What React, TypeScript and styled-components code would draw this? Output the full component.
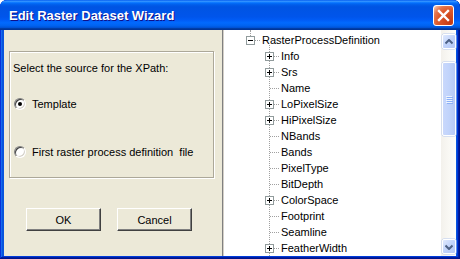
import React from "react";
import styled, { createGlobalStyle } from "styled-components";

const GlobalStyle = createGlobalStyle`
  html, body {
    margin: 0;
    padding: 0;
    background: #ffffff;
  }
  body {
    font-family: "Liberation Sans", Arial, sans-serif;
  }
`;

const Window = styled.div({
  width: 460,
  height: 259,
  display: "flex",
  flexDirection: "column",
  overflow: "hidden",
  borderRadius: "7px 7px 0 0",
  background: "#0855dd",
  boxShadow:
    "inset -1px -1px #00138c, inset 1px 1px #0831d9, inset -2px -2px #001ea0, inset 2px 2px #166aee, inset -3px -3px #003bda, inset 3px 3px #0855dd",
});

const TitleBar = styled.div({
  height: 30,
  flexShrink: 0,
  display: "flex",
  alignItems: "center",
  justifyContent: "space-between",
  padding: "0 6px 0 9px",
  boxSizing: "border-box",
  background:
    "linear-gradient(to bottom, #0058ee 0%, #3593ff 4%, #288eff 6%, #127dff 8%, #036ffc 10%, #0262ee 14%, #0057e5 20%, #0054e3 24%, #0055eb 56%, #005bf5 66%, #026afe 76%, #0062ef 86%, #0052d6 92%, #0040ab 94%, #003092 100%)",
});

const Title = styled.div({
  color: "#ffffff",
  fontWeight: "bold",
  fontSize: 13,
  fontFamily: '"Liberation Sans", Arial, sans-serif',
  textShadow: "1px 1px #0f1089",
  marginTop: 1,
});

const CloseButton = styled.div({
  width: 21,
  height: 21,
  boxSizing: "border-box",
  border: "1px solid #ffffff",
  borderRadius: 3,
  display: "flex",
  alignItems: "center",
  justifyContent: "center",
  background: "radial-gradient(circle at 85% 85%, #c43a12 0%, #de5a2c 55%, #e5774f 75%, #f2b59b 92%, #ffffff 100%)",
  marginTop: 1,
});

const Body = styled.div({
  flex: 1,
  display: "flex",
  margin: "0 4px 3px 4px",
  minHeight: 0,
});

const LeftPane = styled.div({
  width: 218,
  flexShrink: 0,
  background: "#ece9d8",
  display: "flex",
  flexDirection: "column",
});

const GroupBox = styled.div({
  margin: "21px 0 0 5px",
  width: 205,
  height: 127,
  boxSizing: "border-box",
  border: "1px solid #aca899",
  boxShadow: "inset 1px 1px #ffffff, 1px 1px #ffffff",
  display: "flex",
  flexDirection: "column",
  padding: "9px 0 0 3px",
});

const Label = styled.div({
  fontSize: 11,
  lineHeight: "14px",
  height: 14,
  color: "#000000",
  whiteSpace: "nowrap",
});

const RadioRow = styled.div<{ $top: number }>(({ $top }) => ({
  display: "flex",
  alignItems: "center",
  height: 16,
  marginTop: $top,
  paddingLeft: 1,
}));

const RadioCircle = styled.span({
  width: 12,
  height: 12,
  boxSizing: "border-box",
  borderRadius: "50%",
  border: "1px solid",
  borderColor: "#808080 #ffffff #ffffff #808080",
  background: "#ffffff",
  boxShadow: "inset 1px 1px #404040, inset -1px -1px #d4d0c8",
  display: "flex",
  alignItems: "center",
  justifyContent: "center",
  marginRight: 6,
});

const RadioDot = styled.span({
  width: 4,
  height: 4,
  borderRadius: "50%",
  background: "#000000",
});

const ButtonRow = styled.div({
  display: "flex",
  gap: 16,
  margin: "30px 0 0 22px",
});

const Button = styled.div({
  width: 75,
  height: 23,
  boxSizing: "border-box",
  display: "flex",
  alignItems: "center",
  justifyContent: "center",
  fontSize: 11,
  color: "#000000",
  background: "#ece9d8",
  border: "1px solid",
  borderColor: "#ffffff #404040 #404040 #ffffff",
  boxShadow: "inset -1px -1px #808080",
});

const TreePane = styled.div({
  flex: 1,
  display: "flex",
  background: "#ffffff",
  borderLeft: "1px solid #808080",
  boxShadow: "inset 1px 0 #d4d0c8",
  minWidth: 0,
});

const TreeArea = styled.div({
  flex: 1,
  overflow: "hidden",
  paddingTop: 2,
});

const Row = styled.div<{ $indent: number }>(({ $indent }) => ({
  display: "flex",
  alignItems: "center",
  height: 16,
  marginLeft: $indent,
  fontSize: 11,
  color: "#000000",
  whiteSpace: "nowrap",
}));

const ChildList = styled.div({
  marginLeft: 46,
  marginTop: -3,
  paddingTop: 3,
  borderLeft: "1px dotted #a0a0a0",
});

const ExpanderWrap = styled.span<{ $stem?: boolean }>(({ $stem }) => ({
  position: "relative",
  display: "flex",
  width: 9,
  height: 9,
  "&::before": $stem
    ? {
        content: '""',
        position: "absolute",
        left: 4,
        top: -6,
        height: 6,
        borderLeft: "1px dotted #a0a0a0",
      }
    : {},
}));

const Stub = styled.span<{ $w: number }>(({ $w }) => ({
  width: $w,
  height: 0,
  borderTop: "1px dotted #a0a0a0",
  marginRight: 2,
}));

const Spacer = styled.span({
  width: 5,
  flexShrink: 0,
});

const Scrollbar = styled.div({
  width: 15,
  flexShrink: 0,
  display: "flex",
  flexDirection: "column",
  alignItems: "flex-end",
  padding: "4px 0 2px 0",
  background: "linear-gradient(to right, #f3f1ec, #fefefb)",
});

const ScrollButton = styled.div({
  width: 14,
  height: 15,
  boxSizing: "border-box",
  borderRadius: 2,
  border: "1px solid #ffffff",
  background: "linear-gradient(135deg, #e0e9fd 0%, #c1d3fb 50%, #b4c8f6 100%)",
  boxShadow: "0 0 0 0.5px #b8c9f0",
  display: "flex",
  alignItems: "center",
  justifyContent: "center",
});

const Thumb = styled.div({
  width: 14,
  height: 74,
  marginTop: 13,
  boxSizing: "border-box",
  borderRadius: 2,
  border: "1px solid #ffffff",
  background: "linear-gradient(to right, #c9d8fc 0%, #c1d3fb 50%, #b6caf6 100%)",
  boxShadow: "0 0 0 0.5px #b8c9f0",
  display: "flex",
  flexDirection: "column",
  alignItems: "center",
  justifyContent: "center",
  gap: 1,
});

const Grip = styled.span({
  width: 6,
  height: 1,
  background: "#eef4fe",
  boxShadow: "1px 1px #8cb0f8",
});

const Fill = styled.div({
  flex: 1,
});

type TreeNode = { label: string; expandable?: boolean };

const children: TreeNode[] = [
  { label: "Info", expandable: true },
  { label: "Srs", expandable: true },
  { label: "Name" },
  { label: "LoPixelSize", expandable: true },
  { label: "HiPixelSize", expandable: true },
  { label: "NBands" },
  { label: "Bands" },
  { label: "PixelType" },
  { label: "BitDepth" },
  { label: "ColorSpace", expandable: true },
  { label: "Footprint" },
  { label: "Seamline" },
  { label: "FeatherWidth", expandable: true },
];

function Expander({ plus, stem }: { plus: boolean; stem?: boolean }) {
  return (
    <ExpanderWrap $stem={stem}>
      <svg width={9} height={9} viewBox="0 0 9 9">
        <rect x={0.5} y={0.5} width={8} height={8} fill="#ffffff" stroke="#919b9c" />
        <path d="M2 4.5h5" stroke="#000000" />
        {plus && <path d="M4.5 2v5" stroke="#000000" />}
      </svg>
    </ExpanderWrap>
  );
}

function CloseIcon() {
  return (
    <svg width={13} height={13} viewBox="0 0 13 13">
      <path d="M2 2L11 11M11 2L2 11" stroke="#ffffff" strokeWidth={2.4} strokeLinecap="square" />
    </svg>
  );
}

function ArrowUp() {
  return (
    <svg width={8} height={6} viewBox="0 0 8 6">
      <path d="M0.5 4.5L4 1L7.5 4.5" stroke="#4d6185" strokeWidth={2} fill="none" />
    </svg>
  );
}

function ArrowDown() {
  return (
    <svg width={8} height={6} viewBox="0 0 8 6">
      <path d="M0.5 1.5L4 5L7.5 1.5" stroke="#4d6185" strokeWidth={2} fill="none" />
    </svg>
  );
}

function App() {
  return (
    <>
      <GlobalStyle />
      <Window>
        <TitleBar>
          <Title>Edit Raster Dataset Wizard</Title>
          <CloseButton>
            <CloseIcon />
          </CloseButton>
        </TitleBar>
        <Body>
          <LeftPane>
            <GroupBox>
              <Label>Select the source for the XPath:</Label>
              <RadioRow $top={21}>
                <RadioCircle>
                  <RadioDot />
                </RadioCircle>
                <Label>Template</Label>
              </RadioRow>
              <RadioRow $top={32}>
                <RadioCircle />
                <Label>First raster process definition&nbsp; file</Label>
              </RadioRow>
            </GroupBox>
            <ButtonRow>
              <Button>OK</Button>
              <Button>Cancel</Button>
            </ButtonRow>
          </LeftPane>
          <TreePane>
            <TreeArea>
              <Row $indent={23}>
                <Expander plus={false} stem />
                <Stub $w={5} />
                RasterProcessDefinition
              </Row>
              <ChildList>
                {children.map((c) => (
                  <Row key={c.label} $indent={-5}>
                    {c.expandable ? (
                      <>
                        <Expander plus />
                        <Stub $w={5} />
                      </>
                    ) : (
                      <>
                        <Spacer />
                        <Stub $w={9} />
                      </>
                    )}
                    {c.label}
                  </Row>
                ))}
              </ChildList>
            </TreeArea>
            <Scrollbar>
              <ScrollButton>
                <ArrowUp />
              </ScrollButton>
              <Thumb>
                <Grip />
                <Grip />
                <Grip />
                <Grip />
              </Thumb>
              <Fill />
              <ScrollButton>
                <ArrowDown />
              </ScrollButton>
            </Scrollbar>
          </TreePane>
        </Body>
      </Window>
    </>
  );
}

export default App;
